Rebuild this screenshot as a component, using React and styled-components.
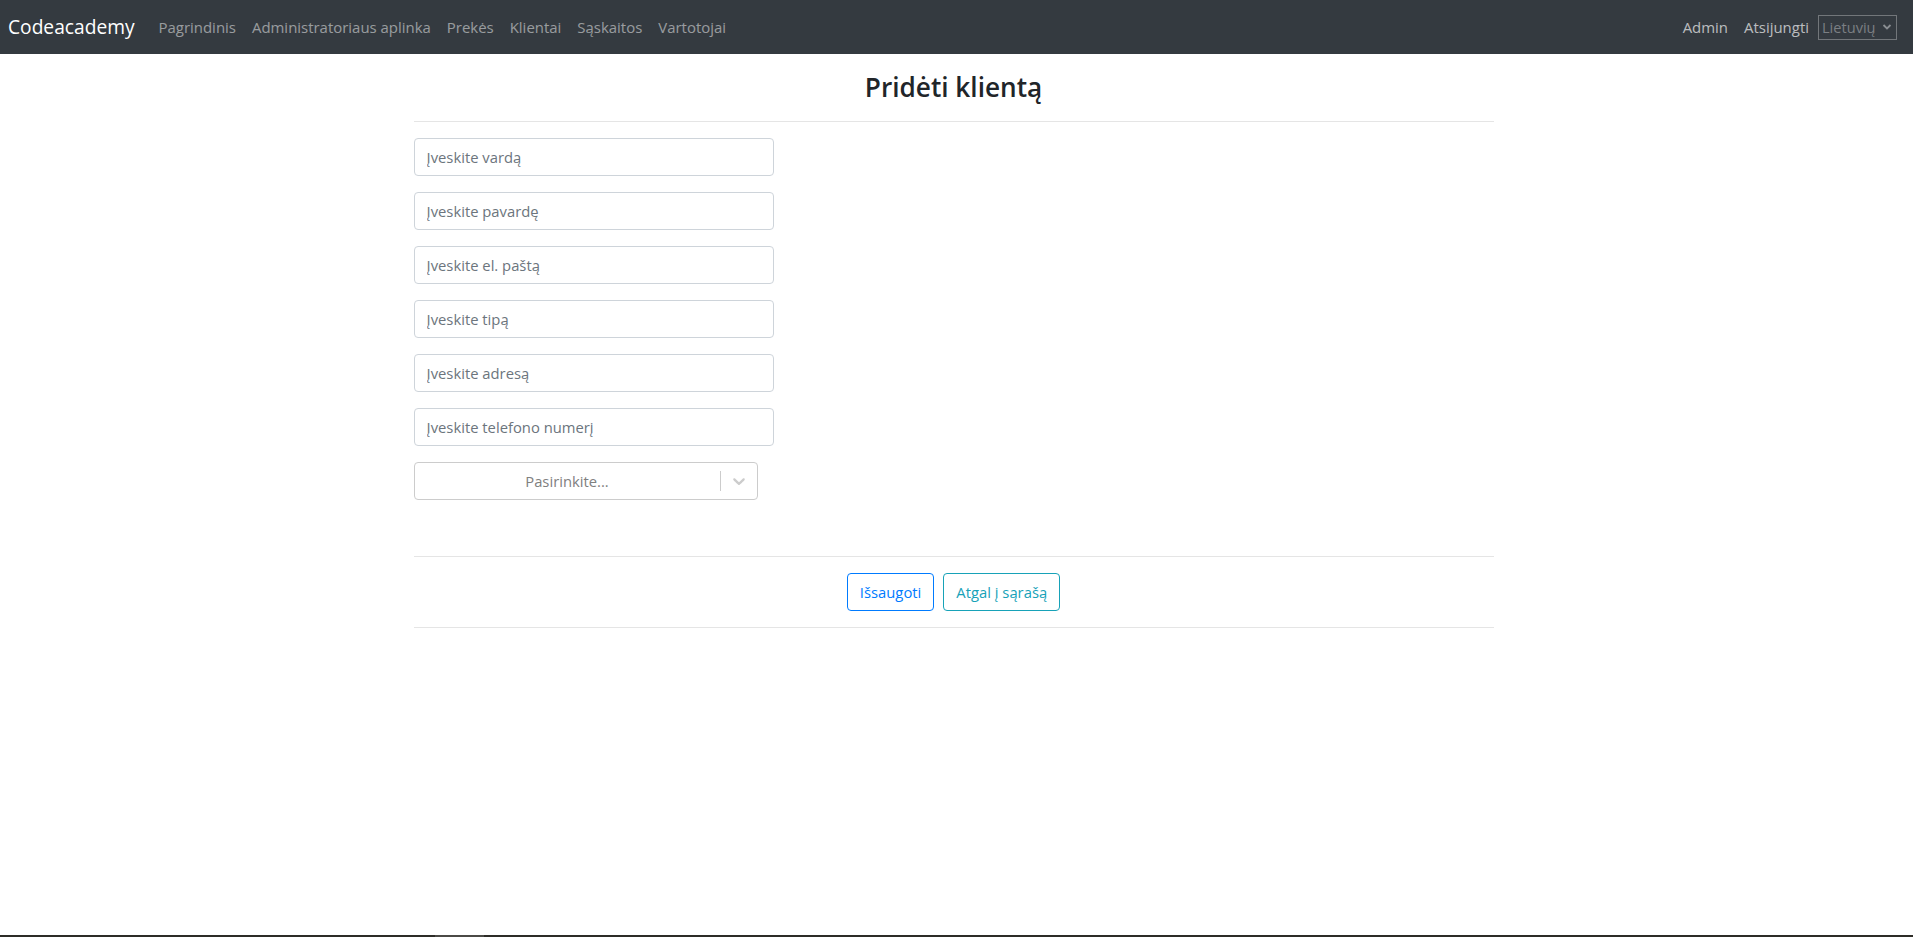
import React from "react";
import styled, { createGlobalStyle } from "styled-components";

const GlobalStyle = createGlobalStyle`
  html, body { margin: 0; padding: 0; background: #fff; }
  body {
    font-family: "Open Sans", "Noto Sans", "Liberation Sans", sans-serif;
    color: #212529;
  }
  * { box-sizing: border-box; }
`;

const Page = styled.div`
  min-height: 100vh;
  display: flex;
  flex-direction: column;
`;

const Navbar = styled.nav`
  height: 54px;
  background: #343a40;
  display: flex;
  align-items: center;
  justify-content: space-between;
  padding: 0 16px 0 8px;
`;

const NavGroup = styled.div`
  display: flex;
  align-items: center;
`;

const Brand = styled.a`
  color: #fff;
  font-size: 19.2px;
  line-height: 30px;
  margin-right: 16px;
  text-decoration: none;
  white-space: nowrap;
`;

const NavLink = styled.a`
  color: ${(p) => (p.$bright ? "rgba(255,255,255,0.68)" : "rgba(255,255,255,0.5)")};
  font-size: 14.95px;
  line-height: 24px;
  padding: 8px;
  text-decoration: none;
  white-space: nowrap;
`;

const LangSelect = styled.div`
  margin-left: 1px;
  height: 25px;
  width: 79px;
  border: 1px solid #72767a;
  display: flex;
  align-items: center;
  justify-content: space-between;
  padding: 0 4px 0 3px;
  color: #7b7f83;
  font-size: 14.6px;
`;

const Main = styled.main`
  width: 1080px;
  margin-left: calc(50% - 543px);
  flex: 1;
`;

const Title = styled.h3`
  margin: 17px 0 0;
  font-size: 26.2px;
  font-weight: 600;
  line-height: 33.6px;
  text-align: center;
  color: #212529;
`;

const Rule = styled.hr`
  margin: ${(p) => p.$top || 16}px 0 16px;
  border: 0;
  border-top: 1px solid rgba(0, 0, 0, 0.1);
  height: 0;
`;

const Form = styled.form`
  width: 360px;
  display: flex;
  flex-direction: column;
  gap: 16px;
`;

const Input = styled.input`
  display: block;
  width: 100%;
  height: 38px;
  padding: 6px 12px;
  font-family: inherit;
  font-size: 14.8px;
  color: #495057;
  background: #fff;
  border: 1px solid #ced4da;
  border-radius: 4px;
  outline: none;
  &::placeholder { color: #6c757d; opacity: 1; }
`;

const SelectControl = styled.div`
  width: 344px;
  height: 38px;
  border: 1px solid #cccccc;
  border-radius: 4px;
  display: flex;
  align-items: center;
  background: #fff;
`;

const SelectValue = styled.div`
  flex: 1;
  text-align: center;
  color: #808080;
  font-size: 14.8px;
  padding: 2px 8px;
`;

const Separator = styled.span`
  align-self: stretch;
  width: 1px;
  margin: 8px 0;
  background: #cccccc;
`;

const Indicator = styled.div`
  display: flex;
  padding: 8px;
  color: #cccccc;
`;

const Actions = styled.div`
  display: flex;
  justify-content: center;
  gap: 9px;
`;

const Button = styled.button`
  height: 38px;
  padding: 0 12px;
  font-family: inherit;
  font-size: 14.8px;
  background: transparent;
  border-radius: 4px;
  border: 1px solid ${(p) => p.$color};
  color: ${(p) => p.$color};
  cursor: pointer;
`;

const BottomStrip = styled.div`
  height: 2px;
  background: #2d2c27;
  display: flex;
`;

const StripThumb = styled.span`
  margin-left: 435px;
  width: 49px;
  background: #4b4a46;
`;

const Chevron = () => (
  <svg width="20" height="20" viewBox="0 0 20 20" fill="currentColor" aria-hidden="true">
    <path d="M4.516 7.548c0.436-0.446 1.043-0.481 1.576 0l3.908 3.747 3.908-3.747c0.533-0.481 1.141-0.446 1.574 0 0.436 0.445 0.408 1.197 0 1.615-0.406 0.418-4.695 4.502-4.695 4.502-0.217 0.223-0.502 0.335-0.787 0.335s-0.57-0.112-0.789-0.335c0 0-4.287-4.084-4.695-4.502s-0.436-1.17 0-1.615z" />
  </svg>
);

const SmallChevron = () => (
  <svg width="10" height="8" viewBox="0 0 10 8" aria-hidden="true">
    <polyline points="1.5,2 5,5.5 8.5,2" fill="none" stroke="#8a8e92" strokeWidth="1.8" />
  </svg>
);

const links = ["Pagrindinis", "Administratoriaus aplinka", "Prekės", "Klientai", "Sąskaitos", "Vartotojai"];
const fields = [
  "Įveskite vardą",
  "Įveskite pavardę",
  "Įveskite el. paštą",
  "Įveskite tipą",
  "Įveskite adresą",
  "Įveskite telefono numerį",
];

export default function App() {
  return (
    <Page>
      <GlobalStyle />
      <Navbar>
        <NavGroup>
          <Brand href="#">Codeacademy</Brand>
          {links.map((l) => (
            <NavLink key={l} href="#">{l}</NavLink>
          ))}
        </NavGroup>
        <NavGroup>
          <NavLink $bright href="#">Admin</NavLink>
          <NavLink $bright href="#">Atsijungti</NavLink>
          <LangSelect>
            <span>Lietuvių</span>
            <SmallChevron />
          </LangSelect>
        </NavGroup>
      </Navbar>
      <Main>
        <Title>Pridėti klientą</Title>
        <Rule />
        <Form onSubmit={(e) => e.preventDefault()}>
          {fields.map((f) => (
            <Input key={f} placeholder={f} />
          ))}
          <SelectControl>
            <SelectValue>Pasirinkite...</SelectValue>
            <Separator />
            <Indicator>
              <Chevron />
            </Indicator>
          </SelectControl>
        </Form>
        <Rule $top={56} />
        <Actions>
          <Button $color="#007bff">Išsaugoti</Button>
          <Button $color="#17a2b8">Atgal į sąrašą</Button>
        </Actions>
        <Rule />
      </Main>
      <BottomStrip>
        <StripThumb />
      </BottomStrip>
    </Page>
  );
}
